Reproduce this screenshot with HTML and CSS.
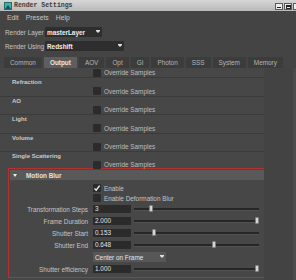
FILE: index.html
```html
<!DOCTYPE html>
<html lang="en">
<head>
    <meta charset="UTF-8">
    <title>Render Settings</title>
    <link rel="stylesheet" href="styles.css">
</head>
<body>
    <div class="window">
        <div class="titlebar">
            <svg class="app-icon" viewBox="0 0 8 8">
                <rect width="8" height="8" fill="#1f6f6a"/>
                <rect x="1" y="1" width="6" height="6" fill="#3fb3a4"/>
                <path d="M1 7 L4 3 L7 7 Z" fill="#1d4f73"/>
            </svg>
            <span class="title">Render Settings</span>
            <div class="winbtns">
                <span class="wb"><i class="wb-min"></i></span>
                <span class="wb"><i class="wb-max"></i></span>
                <span class="wb wb-cut"></span>
            </div>
        </div>

        <div class="menubar">
            <span>Edit</span>
            <span>Presets</span>
            <span>Help</span>
        </div>

        <div class="field-row first">
            <span class="field-label">Render Layer</span>
            <div class="dropdown layer-drop">
                <span class="drop-text">masterLayer</span>
                <span class="drop-arrow"><i></i></span>
            </div>
        </div>
        <div class="field-row">
            <span class="field-label">Render Using</span>
            <div class="dropdown using-drop">
                <span class="drop-text">Redshift</span>
                <span class="drop-arrow"><i></i></span>
            </div>
        </div>

        <div class="tabs">
            <span class="tab">Common</span>
            <span class="tab active">Output</span>
            <span class="tab">AOV</span>
            <span class="tab">Opt</span>
            <span class="tab">GI</span>
            <span class="tab">Photon</span>
            <span class="tab">SSS</span>
            <span class="tab">System</span>
            <span class="tab">Memory</span>
        </div>

        <div class="main">
            <div class="panel">
                <div class="group">
                    <div class="check-row top"><span class="check"></span>Override Samples</div>
                </div>
                <div class="group">
                    <div class="group-label">Refraction</div>
                    <div class="check-row"><span class="check"></span>Override Samples</div>
                </div>
                <div class="group">
                    <div class="group-label">AO</div>
                    <div class="check-row"><span class="check"></span>Override Samples</div>
                </div>
                <div class="group">
                    <div class="group-label">Light</div>
                    <div class="check-row"><span class="check"></span>Override Samples</div>
                </div>
                <div class="group">
                    <div class="group-label">Volume</div>
                    <div class="check-row"><span class="check"></span>Override Samples</div>
                </div>
                <div class="group last">
                    <div class="group-label">Single Scattering</div>
                    <div class="check-row short"><span class="check"></span>Override Samples</div>
                </div>

                <div class="motion">
                    <div class="frame-header"><i class="tri"></i>Motion Blur</div>
                    <div class="motion-body">
                        <div class="mcheck"><span class="check on">
                            <svg viewBox="0 0 8 8"><path d="M1.5 4.5 L3.2 6.2 L6.6 1.6" fill="none" stroke="#f2f2f2" stroke-width="1.3"/></svg>
                        </span>Enable</div>
                        <div class="mcheck"><span class="check"></span>Enable Deformation Blur</div>

                        <div class="mfield">
                            <span class="mlabel">Transformation Steps</span>
                            <span class="num">3</span>
                            <div class="slider"><i class="thumb" style="left: 12%"></i></div>
                        </div>
                        <div class="mfield">
                            <span class="mlabel">Frame Duration</span>
                            <span class="num">2.000</span>
                            <div class="slider"><i class="thumb" style="left: 96.8%"></i></div>
                        </div>
                        <div class="mfield">
                            <span class="mlabel">Shutter Start</span>
                            <span class="num">0.153</span>
                            <div class="slider"><i class="thumb" style="left: 14.4%"></i></div>
                        </div>
                        <div class="mfield">
                            <span class="mlabel">Shutter End</span>
                            <span class="num">0.648</span>
                            <div class="slider"><i class="thumb" style="left: 62.4%"></i></div>
                        </div>
                        <div class="mfield">
                            <span class="mlabel"></span>
                            <div class="option">
                                <span class="drop-text">Center on Frame</span>
                                <span class="drop-arrow"><i></i></span>
                            </div>
                        </div>
                        <div class="mfield">
                            <span class="mlabel">Shutter efficiency</span>
                            <span class="num">1.000</span>
                            <div class="slider"><i class="thumb" style="left: 96.8%"></i></div>
                        </div>
                    </div>
                </div>
            </div>
            <div class="side"></div>
        </div>
    </div>
</body>
</html>
```

FILE: styles.css
```css
* {
    box-sizing: border-box;
}
body {
    margin: 0;
    width: 296px;
    height: 280px;
    overflow: hidden;
    background: #444444;
    font-family: 'Liberation Sans', Arial, sans-serif;
    font-size: 6.4px;
    color: #bdbdbd;
}
.window {
    display: flex;
    flex-direction: column;
    height: 280px;
}

/* title bar */
.titlebar {
    height: 11px;
    display: flex;
    align-items: center;
    padding-left: 4px;
    background: linear-gradient(#d6d6d6, #b9b9b9);
}
.app-icon {
    width: 8px;
    height: 8px;
    margin-right: 2px;
}
.title {
    font-family: 'Liberation Mono', monospace;
    font-weight: bold;
    font-size: 6.5px;
    color: #3c3c3c;
}
.winbtns {
    margin-left: auto;
    display: flex;
    gap: 1px;
    align-self: flex-start;
    margin-top: 3px;
}
.wb {
    width: 8px;
    height: 7px;
    background: #ececec;
    border: 1px solid #5a5a5a;
    display: flex;
    align-items: flex-end;
    justify-content: center;
}
.wb-min {
    width: 4px;
    height: 1px;
    background: #222;
    margin-bottom: 1px;
}
.wb-max {
    width: 5px;
    height: 4px;
    border: 1px solid #222;
    border-top-width: 2px;
    margin-bottom: 0;
}
.wb-cut {
    width: 3px;
    border-right: none;
}

/* menu */
.menubar {
    height: 13px;
    display: flex;
    align-items: center;
    gap: 7px;
    padding-left: 7px;
    font-size: 6.8px;
    color: #c8c8c8;
}

/* top fields */
.field-row {
    display: flex;
    align-items: center;
    height: 10px;
    margin-top: 4px;
    padding-left: 5px;
}
.field-row.first {
    margin-top: 3px;
}
.field-label {
    width: 40px;
    color: #c4c4c4;
}
.dropdown {
    height: 10px;
    display: flex;
    align-items: center;
    background: #2e2e2e;
    border-radius: 1px;
}
.layer-drop {
    width: 57px;
}
.using-drop {
    width: 79px;
}
.drop-text {
    flex: 1;
    padding-left: 2px;
    font-weight: bold;
    color: #f0f0f0;
}
.drop-arrow {
    width: 9px;
    height: 100%;
    display: flex;
    align-items: center;
    justify-content: center;
}
.drop-arrow i {
    width: 0;
    height: 0;
    border-left: 2px solid transparent;
    border-right: 2px solid transparent;
    border-top: 2px solid #e0e0e0;
    box-shadow: 0 -1px 0 0 #e0e0e0;
}

/* tabs */
.tabs {
    display: flex;
    gap: 2px;
    height: 11px;
    margin-top: 6px;
    padding-left: 4px;
}
.tab {
    padding: 0 6px;
    line-height: 11px;
    background: #3c3c3c;
    color: #b4b4b4;
}
.tab.active {
    background: #5e5e5e;
    color: #e8e8e8;
    font-weight: bold;
}

/* panel */
.main {
    flex: 1;
    display: flex;
}
.panel {
    width: 264px;
    background: #474747;
}
.side {
    flex: 1;
    background: #434343;
    border-right: 3px solid #4b4b4b;
}
.group {
    border-bottom: 1px solid #3b3b3b;
}
.group.last {
    border-bottom: none;
}
.group-label {
    height: 9px;
    line-height: 9px;
    padding-left: 12px;
    font-weight: bold;
    font-size: 6px;
    color: #cacaca;
}
.check-row {
    height: 8.5px;
    display: flex;
    align-items: center;
    gap: 3px;
    padding-left: 93px;
    color: #bdbdbd;
}
.check-row.top {
    height: 9px;
}
.check-row.short {
    height: 7px;
}
.check {
    width: 8px;
    height: 8px;
    background: #2b2b2b;
    border-radius: 1px;
    flex: none;
    display: flex;
}
.check svg {
    width: 8px;
    height: 8px;
}

/* motion blur frame */
.motion {
    margin-left: 8px;
    width: 261px;
    border: 1px solid #b3312f;
    padding: 1px 4px 2px 1px;
}
.frame-header {
    height: 10px;
    display: flex;
    align-items: center;
    background: #595959;
    font-weight: bold;
    color: #e2e2e2;
}
.tri {
    width: 0;
    height: 0;
    margin: 0 9px 0 3px;
    border-left: 2.5px solid transparent;
    border-right: 2.5px solid transparent;
    border-top: 3px solid #eeeeee;
}
.motion-body {
    padding-top: 3px;
}
.mcheck {
    height: 10px;
    display: flex;
    align-items: center;
    gap: 3px;
    padding-left: 83px;
    color: #c4c4c4;
}
.mfield {
    height: 12px;
    display: flex;
    align-items: center;
}
.mlabel {
    width: 78px;
    margin-right: 5px;
    text-align: right;
    color: #c4c4c4;
}
.num {
    width: 38px;
    height: 8px;
    line-height: 8px;
    padding-left: 2px;
    background: #2b2b2b;
    color: #e4e4e4;
}
.slider {
    position: relative;
    width: 125px;
    height: 2px;
    margin-left: 3px;
    background: #262626;
    border-bottom: 1px solid #525252;
    box-sizing: content-box;
}
.thumb {
    position: absolute;
    top: -3px;
    width: 4px;
    height: 7px;
    background: #d4d4d4;
    border: 1px solid #808080;
    border-radius: 1px;
}
.option {
    width: 73px;
    height: 10px;
    display: flex;
    align-items: center;
    background: #575757;
}
.option .drop-text {
    font-weight: normal;
    color: #e6e6e6;
}
```
